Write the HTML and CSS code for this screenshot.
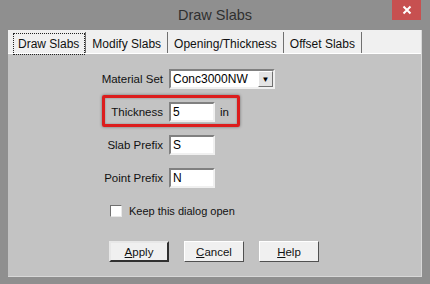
FILE: index.html
```html
<!DOCTYPE html>
<html lang="en">
<head>
  <meta charset="UTF-8">
  <title>Draw Slabs</title>
  <link rel="stylesheet" href="styles.css">
</head>
<body>
  <div class="window">
    <div class="titlebar">
      <span class="title">Draw Slabs</span>
      <div class="close">
        <svg width="10" height="10" viewBox="0 0 10 10"><path d="M1.5 1.5 L8.5 8.5 M8.5 1.5 L1.5 8.5" stroke="#fff" stroke-width="2"/></svg>
      </div>
    </div>
    <div class="client">
      <div class="tabs">
        <div class="tab active"><span class="focus">Draw Slabs</span></div>
        <div class="tab">Modify Slabs</div>
        <div class="tab">Opening/Thickness</div>
        <div class="tab">Offset Slabs</div>
      </div>
      <div class="panel">
        <div class="form">
          <label>Material Set</label>
          <div class="select"><span>Conc3000NW</span><span class="drop">&#9660;</span></div>
          <label>Thickness</label>
          <div class="field"><input class="text" value="5"><span class="unit">in</span></div>
          <label>Slab Prefix</label>
          <div class="field"><input class="text" value="S"></div>
          <label>Point Prefix</label>
          <div class="field"><input class="text" value="N"></div>
          <div class="highlight"></div>
        </div>
        <div class="check"><span class="box"></span>Keep this dialog open</div>
        <div class="buttons">
          <button class="btn default"><u>A</u>pply</button>
          <button class="btn"><u>C</u>ancel</button>
          <button class="btn"><u>H</u>elp</button>
        </div>
      </div>
    </div>
  </div>
</body>
</html>
```

FILE: styles.css
```css
body { margin: 0; background: #8f8f8f; font-family: "Liberation Sans", Arial, sans-serif; }
.window { width: 430px; height: 284px; display: flex; flex-direction: column; }
.titlebar { height: 30px; position: relative; display: flex; justify-content: center; align-items: center; }
.title { font-size: 14.5px; color: #2f2f2f; margin-top: 0; }
.close { position: absolute; right: 9px; top: 0; width: 29px; height: 20px; background: #c75050; display: flex; align-items: center; justify-content: center; }
.client { margin: 0 8px; height: 246px; display: flex; flex-direction: column; background: #c3c3c3; border-right: 1px solid #d8d8d8; border-bottom: 1px solid #d8d8d8; }
.tabs { height: 21px; background: #f0f0f0; border-bottom: 1px solid #ffffff; display: flex; padding: 2px 0 0 4px; align-items: stretch; }
.tab { font-size: 12px; color: #111; padding: 5px 6px 0 6px; border-right: 1px solid #707070; }
.tab.active { padding: 1px 0 0 1px; }
.focus { display: inline-block; border: 1px dotted #222; padding: 3px 5px 3px 4px; }
.panel { flex: 1; padding: 15px 0 0 0; display: flex; flex-direction: column; }
.form { display: grid; grid-template-columns: 155px auto; column-gap: 6px; row-gap: 13px; align-items: center; position: relative; }
.form label { text-align: right; font-size: 11.5px; color: #111; }
.select { width: 100px; height: 16px; background: #fff; border: 2px solid; border-color: #808080 #f0f0f0 #f0f0f0 #808080; display: flex; justify-content: space-between; align-items: center; font-size: 12px; color: #000; padding-left: 2px; }
.drop { width: 13px; height: 14px; background: #e4e4e4; border: 1px solid; border-color: #fff #707070 #707070 #fff; font-size: 8px; display: flex; align-items: center; justify-content: center; }
.field { display: flex; align-items: center; height: 20px; }
.text { width: 38px; height: 16px; padding: 0 2px; border: 2px solid; border-color: #808080 #f0f0f0 #f0f0f0 #808080; font: 12px "Liberation Sans", Arial, sans-serif; color: #000; outline: none; }
.unit { font-size: 11.5px; margin-left: 5px; color: #111; }
.highlight { position: absolute; left: 94px; top: 26px; width: 132px; height: 26px; border: 3px solid #dc1d1d; border-radius: 2px; box-shadow: 0 0 3px rgba(0,0,0,0.45), inset 0 0 2px rgba(0,0,0,0.35); }
.check { display: flex; align-items: center; font-size: 11px; color: #111; margin: 17px 0 0 102px; }
.box { width: 10px; height: 10px; background: #fff; border: 1px solid; border-color: #707070 #e8e8e8 #e8e8e8 #707070; margin-right: 7px; }
.buttons { display: flex; gap: 15px; margin: 24px 0 0 101px; }
.btn { width: 60px; height: 21px; background: #f0f0f0; border: 1px solid; border-color: #fff #505050 #505050 #fff; font: 11.5px "Liberation Sans", Arial, sans-serif; color: #111; padding: 0; }
.btn.default { border: 2px solid; border-color: #e8e8e8 #303030 #303030 #e8e8e8; }
```
